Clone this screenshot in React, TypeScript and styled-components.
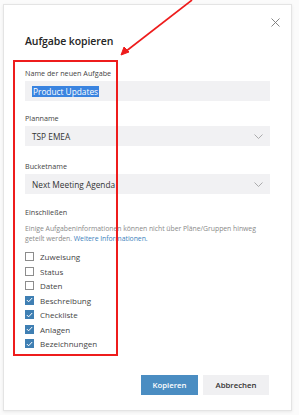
import styled, { createGlobalStyle } from "styled-components";

const GlobalStyle = createGlobalStyle`
    html, body {
        margin: 0;
        padding: 0;
        background: #fbfbfb;
    }
    body {
        font-family: "Open Sans", "Noto Sans", sans-serif;
        color: #333;
    }
`

const Page = styled.div`
    position: relative;
    width: 299px;
    height: 415px;
    padding: 4px 0 0 3px;
    box-sizing: border-box;
    overflow: hidden;
`

const Dialog = styled.div`
    position: relative;
    width: 289px;
    height: 407px;
    box-sizing: border-box;
    background: #fff;
    border: 1px solid #e4e4e4;
    box-shadow: 0 1px 3px rgba(0, 0, 0, 0.08);
    padding: 29px 21px 0 21px;
    display: flex;
    flex-direction: column;
`

const CloseBtn = styled.button`
    position: absolute;
    top: 12px;
    right: 11px;
    width: 10px;
    height: 10px;
    padding: 0;
    border: none;
    background: none;
    display: flex;
    align-items: center;
    justify-content: center;
`

const Title = styled.h2`
    margin: 0;
    font-size: 10.5px;
    line-height: 14px;
    font-weight: 600;
    color: #252525;
    letter-spacing: -0.1px;
`

const Field = styled.div<{ $top: number }>`
    display: flex;
    flex-direction: column;
    margin-top: ${p => p.$top}px;
`

const Label = styled.label`
    font-size: 7.2px;
    line-height: 10px;
    color: #444;
    margin-bottom: 3px;
`

const Input = styled.div`
    width: 245px;
    height: 20px;
    box-sizing: border-box;
    background: #f1f1f3;
    padding-left: 7px;
    display: flex;
    align-items: center;
    font-size: 8.3px;
    color: #333;
`

const Selected = styled.span`
    background: #3a84e0;
    color: #fff;
    padding: 0 1px;
    line-height: 11px;
`

const Select = styled(Input)`
    justify-content: space-between;
    padding-right: 7px;
`

const Hint = styled.p`
    margin: 4px 0 0 0;
    width: 250px;
    font-size: 6.9px;
    line-height: 10px;
    color: #8a8a8a;
    letter-spacing: -0.05px;
`

const HintLink = styled.a`
    color: #3d82bd;
    text-decoration: none;
`

const CheckList = styled.div`
    display: flex;
    flex-direction: column;
    gap: 5.5px;
    margin-top: 8px;
`

const CheckRow = styled.div`
    display: flex;
    align-items: center;
    gap: 6px;
    height: 9px;
    font-size: 8px;
    color: #444;
`

const Box = styled.span<{ $checked: boolean }>`
    width: 9px;
    height: 9px;
    box-sizing: border-box;
    border: 1px solid ${p => (p.$checked ? "#3f7fb3" : "#8c8c8c")};
    background: ${p => (p.$checked ? "#3f7fb3" : "#fff")};
    display: flex;
    align-items: center;
    justify-content: center;
`

const Footer = styled.div`
    display: flex;
    justify-content: flex-end;
    gap: 5px;
    margin-top: 27px;
    padding-right: 1px;
`

const Button = styled.button<{ $primary?: boolean }>`
    height: 20px;
    width: ${p => (p.$primary ? "57px" : "66px")};
    border: none;
    padding: 0;
    font-family: inherit;
    font-size: 7.8px;
    font-weight: 600;
    color: ${p => (p.$primary ? "#fff" : "#333")};
    background: ${p => (p.$primary ? "#4a8dc2" : "#f0f0f2")};
`

const Highlight = styled.div`
    position: absolute;
    left: 13px;
    top: 60px;
    width: 105px;
    height: 296px;
    box-sizing: border-box;
    border: 2px solid #ee1c1c;
    pointer-events: none;
`

const Arrow = styled.svg`
    position: absolute;
    left: 0;
    top: 0;
    pointer-events: none;
`

const Chevron = () => (
    <svg width="9" height="5" viewBox="0 0 9 5">
        <path d="M0.5 0.5 L4.5 4.5 L8.5 0.5" fill="none" stroke="#999" strokeWidth="0.8" />
    </svg>
)

const Check = () => (
    <svg width="7" height="6" viewBox="0 0 7 6">
        <path d="M0.8 3 L2.6 4.8 L6.2 1" fill="none" stroke="#fff" strokeWidth="1" />
    </svg>
)

const options = [
    { name: "Zuweisung", checked: false },
    { name: "Status", checked: false },
    { name: "Daten", checked: false },
    { name: "Beschreibung", checked: true },
    { name: "Checkliste", checked: true },
    { name: "Anlagen", checked: true },
    { name: "Bezeichnungen", checked: true },
]

const App = () => {
    return (
        <>
            <GlobalStyle />
            <Page>
                <Dialog>
                    <CloseBtn aria-label="Schließen">
                        <svg width="9" height="9" viewBox="0 0 9 9">
                            <path d="M0.5 0.5 L8.5 8.5 M8.5 0.5 L0.5 8.5" stroke="#777" strokeWidth="0.9" />
                        </svg>
                    </CloseBtn>
                    <Title>Aufgabe kopieren</Title>

                    <Field $top={20}>
                        <Label>Name der neuen Aufgabe</Label>
                        <Input>
                            <Selected>Product Updates</Selected>
                        </Input>
                    </Field>

                    <Field $top={12}>
                        <Label>Planname</Label>
                        <Select>
                            <span>TSP EMEA</span>
                            <Chevron />
                        </Select>
                    </Field>

                    <Field $top={15}>
                        <Label>Bucketname</Label>
                        <Select>
                            <span>Next Meeting Agenda</span>
                            <Chevron />
                        </Select>
                    </Field>

                    <Field $top={13}>
                        <Label>Einschließen</Label>
                    </Field>
                    <Hint>
                        Einige Aufgabeninformationen können nicht über Pläne/Gruppen hinweg
                        geteilt werden. <HintLink href="#">Weitere Informationen.</HintLink>
                    </Hint>

                    <CheckList>
                        {options.map(opt => (
                            <CheckRow key={opt.name}>
                                <Box $checked={opt.checked}>{opt.checked && <Check />}</Box>
                                {opt.name}
                            </CheckRow>
                        ))}
                    </CheckList>

                    <Footer>
                        <Button $primary>Kopieren</Button>
                        <Button>Abbrechen</Button>
                    </Footer>
                </Dialog>

                <Highlight />
                <Arrow width="299" height="70" viewBox="0 0 299 70">
                    <line x1="192" y1="0" x2="125" y2="52" stroke="#ee1c1c" strokeWidth="1.6" />
                    <path d="M121 55 L124 47 L129 52 Z" fill="#ee1c1c" stroke="#ee1c1c" strokeWidth="1" />
                </Arrow>
            </Page>
        </>
    )
}

export default App
